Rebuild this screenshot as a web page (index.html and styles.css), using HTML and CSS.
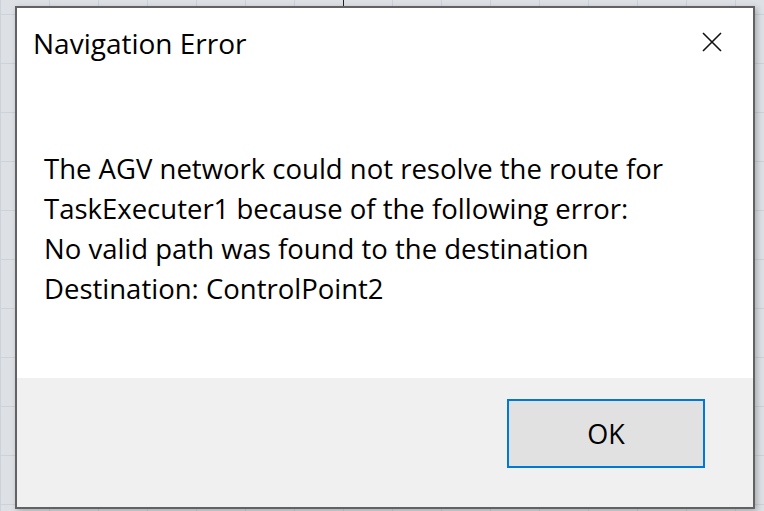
FILE: index.html
```html
<!DOCTYPE html>
<html>
<head>
<meta charset="utf-8">
<link rel="stylesheet" href="styles.css">
</head>
<body>
<div class="desktop">
  <span class="mark"></span>
  <div class="dialog">
    <div class="header">
      <div class="title">Navigation Error</div>
      <button class="close" aria-label="Close">
        <svg width="20" height="20" viewBox="0 0 20 20"><path d="M1 1 L19 19 M19 1 L1 19" stroke="#111" stroke-width="1.6" fill="none"/></svg>
      </button>
    </div>
    <div class="content">
      <p class="message">The AGV network could not resolve the route for<br>TaskExecuter1 because of the following error:<br>No valid path was found to the destination<br>Destination: ControlPoint2</p>
    </div>
    <div class="footer">
      <button class="ok">OK</button>
    </div>
  </div>
</div>
</body>
</html>
```
FILE: styles.css
```css
html, body {
  margin: 0;
  padding: 0;
  width: 764px;
  height: 511px;
  overflow: hidden;
}
body {
  background-color: #dde1e5;
  background-image:
    linear-gradient(to right, #ccd2da 1px, transparent 1px),
    linear-gradient(to bottom, #ccd2da 1px, transparent 1px);
  background-size: 49px 49px;
  background-position: 0 -35px;
  font-family: "Open Sans", "Noto Sans", sans-serif;
}
.desktop {
  position: relative;
  padding: 6px 9px 0 15px;
}
.mark {
  position: absolute;
  left: 343px;
  top: 0;
  width: 1px;
  height: 6px;
  background: #222;
}
.dialog {
  width: 740px;
  height: 503px;
  box-sizing: border-box;
  border: 2px solid #626262;
  background: #fff;
  display: flex;
  flex-direction: column;
  box-shadow: 2px 2px 6px rgba(0,0,0,0.25);
}
.header {
  display: flex;
  align-items: flex-start;
  justify-content: space-between;
  height: 90px;
}
.title {
  font-size: 28px;
  color: #000;
  margin: 17px 0 0 16px;
  line-height: 36px;
}
.close {
  border: 0;
  background: transparent;
  padding: 0;
  margin: 24px 31px 0 0;
  width: 20px;
  height: 20px;
  display: flex;
}
.content {
  flex: 1;
  padding: 51px 0 0 27px;
}
.message {
  margin: 0;
  font-size: 27.5px;
  line-height: 40px;
  color: #000;
}
.footer {
  height: 129px;
  background: #f0f0f0;
  display: flex;
  justify-content: flex-end;
  align-items: flex-start;
  padding: 21px 48px 0 0;
  box-sizing: border-box;
}
.ok {
  width: 198px;
  height: 69px;
  box-sizing: border-box;
  border: 2px solid #0078d7;
  background: #e1e1e1;
  font-family: "Open Sans", "Noto Sans", sans-serif;
  font-size: 27px;
  color: #000;
  padding: 0;
}
```
